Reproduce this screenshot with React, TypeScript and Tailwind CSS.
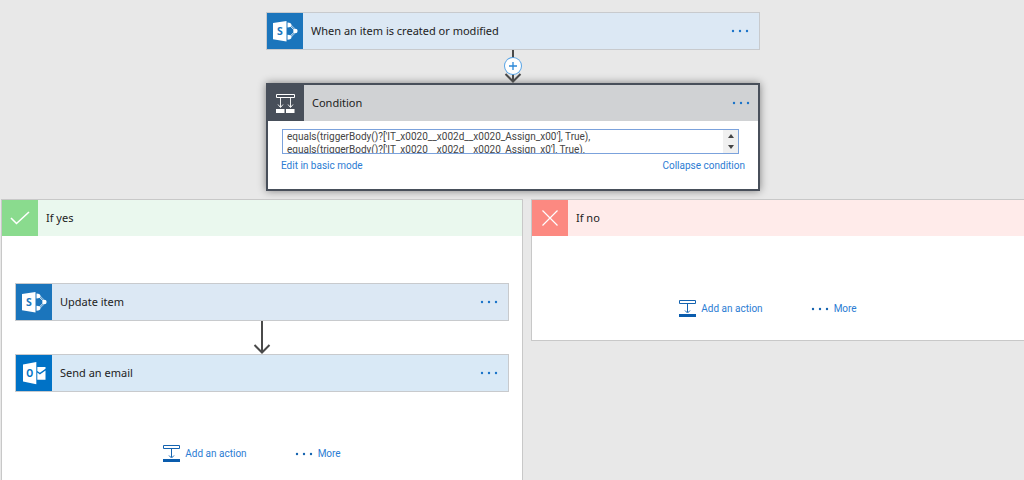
import type { ReactNode } from "react"

const expression = [
  "equals(triggerBody()?['IT_x0020__x002d__x0020_Assign_x00'], True),",
  "equals(triggerBody()?['IT_x0020__x002d__x0020_Assign_x0'], True),",
].join("\n")

function Dots() {
  return (
    <svg width="18" height="4" viewBox="0 0 18 4" fill="currentColor" aria-hidden="true">
      <circle cx="2" cy="2" r="1.2" />
      <circle cx="9" cy="2" r="1.2" />
      <circle cx="16" cy="2" r="1.2" />
    </svg>
  )
}

function MenuButton({ label }: { label: string }) {
  return (
    <button type="button" aria-label={label} className="flex h-full items-center px-2 text-[#1a73c9]">
      <Dots />
    </button>
  )
}

function SharePointIcon() {
  return (
    <svg width="36" height="36" viewBox="0 0 36 36" aria-hidden="true">
      <path d="M6 10 19.5 8v20.5L6 26.2z" fill="#fff" />
      <text x="12.8" y="22" textAnchor="middle" fontSize="10.5" fontWeight="700" fontFamily="Open Sans" fill="#1b75bc">S</text>
      <path d="M22 11.8 28.4 18 22 24.4" fill="none" stroke="#fff" strokeWidth="1" />
      <path d="M22 11.8q5 .8 6.6 6.2-1.6 5.4-6.6 6.4" fill="none" stroke="#fff" strokeWidth="0.6" />
      <path d="M20.5 9.5q4 .3 4 2.5t-4 2.6zM20.5 21.8q4 .3 4 2.5t-4 2.4z" fill="#fff" />
      <circle cx="28.4" cy="18" r="2.2" fill="#fff" />
    </svg>
  )
}

function OutlookIcon() {
  return (
    <svg width="36" height="36" viewBox="0 0 36 36" aria-hidden="true">
      <path d="M7 9.5 20.3 7v22.2L7 26.5z" fill="#fff" />
      <text x="13.6" y="21.6" textAnchor="middle" fontSize="10" fontWeight="700" fontFamily="Roboto" fill="#0072c6">O</text>
      <path d="M21.3 12h8.2v1.8l-5.6 3.9-2.6-1.8zM21.3 17.6l2.6 1.8 5.6-3.8v9.1h-8.2z" fill="#fff" />
    </svg>
  )
}

function ConditionIcon() {
  return (
    <svg width="36" height="36" viewBox="0 0 36 36" fill="none" stroke="#fff" aria-hidden="true">
      <path d="M8.5 9.5h18v3h-18z" />
      <path d="M12.5 13v9M22.5 13v9M10 19.5l2.5 3 2.5-3M20 19.5l2.5 3 2.5-3" strokeWidth="0.9" />
      <path d="M8 24h8.5v4H8zM18 24h8.5v4H18z" fill="#fff" stroke="none" />
    </svg>
  )
}

function AddActionIcon() {
  return (
    <svg width="17" height="17" viewBox="0 0 17 17" fill="none" stroke="#1463b0" aria-hidden="true">
      <path d="M.5.5h16v3H.5z" />
      <path d="M8.5 4v8M6 10.5l2.5 2.5 2.5-2.5" />
      <path d="M0 14h17v3H0z" fill="#0a5cad" stroke="none" />
    </svg>
  )
}

function Arrow({ withAdd = false }: { withAdd?: boolean }) {
  return (
    <div className="relative flex h-[33px] justify-center">
      <svg width="18" height="33" viewBox="0 0 18 33" fill="none" stroke="#4a4a4a" strokeWidth="2" aria-hidden="true">
        <path d="M9 0v31M1.5 24 9 31.5l7.5-7.5" />
      </svg>
      {withAdd && (
        <button type="button" aria-label="Insert a step" className="absolute top-2 flex size-4 items-center justify-center rounded-full bg-white text-[#2b88d8] ring-1 ring-[#5aa5e6]">
          <svg width="8" height="8" viewBox="0 0 8 8" stroke="currentColor" strokeWidth="1.3" aria-hidden="true">
            <path d="M4 0v8M0 4h8" />
          </svg>
        </button>
      )}
    </div>
  )
}

type StepProps = {
  title: string
  icon: ReactNode
  iconClass: string
  bodyClass: string
}

function StepCard({ title, icon, iconClass, bodyClass }: StepProps) {
  return (
    <div className={`flex h-[38px] items-center border border-[#c8cacd] pr-0.5 ${bodyClass}`}>
      <div className={`size-9 shrink-0 ${iconClass}`}>{icon}</div>
      <h2 className="flex-1 truncate pl-2 text-[11px]">{title}</h2>
      <MenuButton label={`${title} menu`} />
    </div>
  )
}

function BranchActions() {
  return (
    <div className="flex h-[17px] items-center justify-center pr-5 font-[Roboto,sans-serif] text-[10px] text-[#2b7cd3]">
      <button type="button" className="flex items-center gap-[5px]">
        <AddActionIcon />
        Add an action
      </button>
      <button type="button" className="ml-12 flex items-center gap-[5px]">
        <span className="text-[#1463b0]"><Dots /></span>
        More
      </button>
    </div>
  )
}

function ConditionCard() {
  return (
    <section className="border-2 border-[#484f5a] bg-white shadow-[0_0_8px_rgba(0,0,0,0.45)]">
      <div className="flex h-9 items-center bg-[#d0d2d4]">
        <div className="size-9 shrink-0 bg-[#484f5a]">
          <ConditionIcon />
        </div>
        <h2 className="flex-1 pl-2 text-[11px]">Condition</h2>
        <MenuButton label="Condition menu" />
      </div>
      <div className="pt-2 pr-[19px] pl-3.5">
        <div className="flex h-[25px] border border-[#7ba2dc]">
          <textarea
            aria-label="Condition expression"
            defaultValue={expression}
            wrap="off"
            className="min-w-0 flex-1 resize-none overflow-hidden px-1 font-[Roboto,sans-serif] text-[10px] leading-[13px] text-[#444] outline-none"
          />
          <div className="flex w-[15px] flex-col bg-[#f0f0f0] text-[#444]">
            <button type="button" aria-label="Scroll up" className="flex flex-1 items-center justify-center">
              <svg width="6" height="4" viewBox="0 0 6 4" fill="currentColor"><path d="M0 4 3 0l3 4z" /></svg>
            </button>
            <button type="button" aria-label="Scroll down" className="flex flex-1 items-center justify-center">
              <svg width="6" height="4" viewBox="0 0 6 4" fill="currentColor"><path d="M0 0h6L3 4z" /></svg>
            </button>
          </div>
        </div>
      </div>
      <div className="flex justify-between px-[13px] pt-1 pb-[15px] font-[Roboto,sans-serif] text-[10px] leading-4 text-[#2b7cd3]">
        <a href="#basic">Edit in basic mode</a>
        <a href="#collapse">Collapse condition</a>
      </div>
    </section>
  )
}

export default function App() {
  return (
    <main className="flex h-screen flex-col overflow-hidden bg-[#e8e8e8] pt-3 font-['Noto_Sans','Open_Sans',sans-serif] text-[#222]">
      <div className="pl-0.5">
        <div className="mx-auto max-w-[494px]">
          <StepCard title="When an item is created or modified" icon={<SharePointIcon />} iconClass="bg-[#1b75bc]" bodyClass="bg-[#dce8f4]" />
          <Arrow withAdd />
          <ConditionCard />
        </div>
      </div>
      <div className="mt-2 grid flex-1 grid-cols-[522fr_493fr] items-start gap-2 pl-px">
        <section className="h-full border border-b-0 border-[#c8c8c8] bg-white">
          <div className="flex h-9 items-center bg-[#eaf8ee]">
            <div className="flex size-9 items-center justify-center bg-[#8adb8e]">
              <svg width="20" height="14" viewBox="0 0 20 14" fill="none" stroke="#fff" strokeWidth="1.6" aria-hidden="true">
                <path d="m1 7 5.5 5.5L19 1" />
              </svg>
            </div>
            <h2 className="pl-2 text-[11px]">If yes</h2>
          </div>
          <div className="px-[13px] pt-[47px]">
            <StepCard title="Update item" icon={<SharePointIcon />} iconClass="bg-[#1b75bc]" bodyClass="bg-[#dce8f4]" />
            <Arrow />
            <StepCard title="Send an email" icon={<OutlookIcon />} iconClass="bg-[#0072c6]" bodyClass="bg-[#d9e9f6]" />
          </div>
          <div className="pt-[53px]">
            <BranchActions />
          </div>
        </section>
        <section className="border border-r-0 border-[#c8c8c8] bg-white">
          <div className="flex h-9 items-center bg-[#ffebea]">
            <div className="flex size-9 items-center justify-center bg-[#fc8981]">
              <svg width="16" height="16" viewBox="0 0 16 16" stroke="#fff" strokeWidth="1.2" aria-hidden="true">
                <path d="m.5.5 15 15M15.5.5l-15 15" />
              </svg>
            </div>
            <h2 className="pl-2 text-[11px]">If no</h2>
          </div>
          <div className="pt-16 pb-[23px]">
            <BranchActions />
          </div>
        </section>
      </div>
    </main>
  )
}
